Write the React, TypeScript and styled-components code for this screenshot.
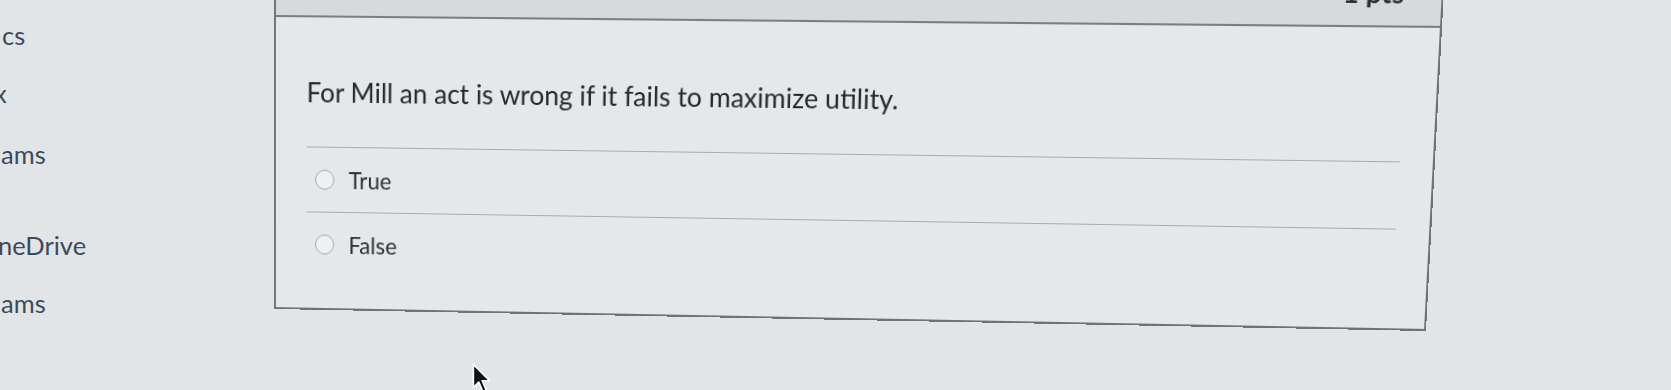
import React from "react";
import styled, { createGlobalStyle } from "styled-components";

const GlobalStyle = createGlobalStyle`
  html, body {
    margin: 0;
    padding: 0;
    background: #e2e5e7;
    overflow: hidden;
    font-family: Lato, "Open Sans", "Liberation Sans", sans-serif;
  }
`;

const Page = styled.div`
  position: relative;
  display: flex;
  height: 390px;
  overflow: hidden;
  background: #e2e5e7;
`;

const Sidebar = styled.nav`
  width: 274px;
  flex-shrink: 0;
  overflow: hidden;
  padding-top: 23px;
  box-sizing: border-box;
`;

const NavItem = styled.div<{ $space: number; $shift: number }>`
  height: ${(p) => p.$space}px;
  margin-left: ${(p) => p.$shift}px;
  font-size: 25.5px;
  line-height: 24px;
  color: #3b4b5a;
  white-space: nowrap;
`;

const Main = styled.main`
  flex: 1;
  min-width: 0;
`;

const Card = styled.section`
  width: 1168px;
  box-sizing: border-box;
  margin-top: -31px;
  border: 2px solid #707376;
  border-top: none;
  background: #e5e7e9;
  transform-origin: 0 48px;
  transform: matrix3d(
    0.962725, 0.0090668, 0, -0.0000319135,
    0, 1.013371, 0, 0.0000457911,
    0, 0, 1, 0,
    0, 0, 0, 1
  );
`;

const CardHeader = styled.header`
  height: 48px;
  box-sizing: border-box;
  border-bottom: 2px solid #7c7f82;
  background: #d7dadc;
  display: flex;
  justify-content: flex-end;
  padding: 3px 36px 0 0;
`;

const Points = styled.span`
  font-size: 27px;
  line-height: 24px;
  font-weight: 700;
  color: #2d3033;
`;

const CardBody = styled.div`
  height: 290px;
  box-sizing: border-box;
  padding: 59px 32px 0;
`;

const Question = styled.p`
  margin: 0;
  font-size: 27px;
  line-height: 30px;
  color: #262829;
`;

const Options = styled.div`
  margin-top: 39px;
  display: flex;
  flex-direction: column;
`;

const OptionRow = styled.label`
  height: 65px;
  box-sizing: border-box;
  border-top: 1.5px solid #a9acaf;
  display: flex;
  align-items: center;
  padding-left: 9px;
`;

const Radio = styled.span`
  width: 20px;
  height: 20px;
  box-sizing: border-box;
  border-radius: 50%;
  border: 1.5px solid #a3a6a9;
  background: #eef0f1;
  flex-shrink: 0;
`;

const OptionText = styled.span`
  margin-left: 15px;
  font-size: 23px;
  color: #2c2f31;
`;

const Cursor = styled.svg`
  position: absolute;
  left: 472px;
  top: 363px;
  width: 19px;
  height: 30px;
`;

const navItems = [
  { text: "cs", space: 58, shift: 2 },
  { text: "x", space: 61, shift: -6 },
  { text: "ams", space: 91, shift: 1 },
  { text: "neDrive", space: 58, shift: -2 },
  { text: "ams", space: 40, shift: 1 },
];

export default function App() {
  return (
    <>
      <GlobalStyle />
      <Page>
        <Sidebar>
          {navItems.map((n, i) => (
            <NavItem key={i} $space={n.space} $shift={n.shift}>
              {n.text}
            </NavItem>
          ))}
        </Sidebar>
        <Main>
          <Card>
            <CardHeader>
              <Points>1 pts</Points>
            </CardHeader>
            <CardBody>
              <Question>For Mill an act is wrong if it fails to maximize utility.</Question>
              <Options>
                <OptionRow>
                  <Radio />
                  <OptionText>True</OptionText>
                </OptionRow>
                <OptionRow>
                  <Radio />
                  <OptionText>False</OptionText>
                </OptionRow>
              </Options>
            </CardBody>
          </Card>
        </Main>
        <Cursor viewBox="0 0 14 22">
          <path
            d="M1 1 L1 18 L5 14 L8 21 L10.5 20 L7.5 13 L13 13 Z"
            fill="#111"
            stroke="#fff"
            strokeWidth="1.2"
            strokeLinejoin="round"
          />
        </Cursor>
      </Page>
    </>
  );
}
